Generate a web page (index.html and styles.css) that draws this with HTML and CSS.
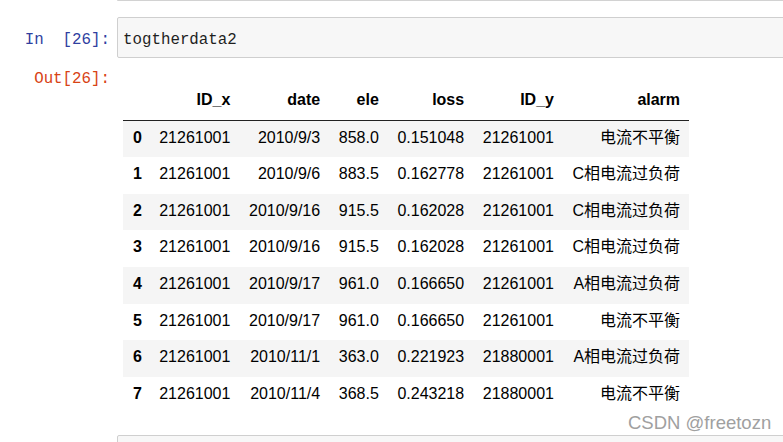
FILE: index.html
```html
<!DOCTYPE html>
<html>
<head>
<meta charset="utf-8">
<link rel="stylesheet" href="styles.css">
</head>
<body>
<div class="prev-cell"></div>
<div class="cell-in">
  <div class="prompt in-prompt">In&nbsp;&nbsp;[26]:</div>
  <div class="input-box">togtherdata2</div>
</div>
<div class="cell-out">
  <div class="prompt out-prompt">Out[26]:</div>
  <table class="df">
    <thead>
      <tr><th></th><th>ID_x</th><th>date</th><th>ele</th><th>loss</th><th>ID_y</th><th>alarm</th></tr>
    </thead>
    <tbody>
      <tr><th>0</th><td>21261001</td><td>2010/9/3</td><td>858.0</td><td>0.151048</td><td>21261001</td><td>电流不平衡</td></tr>
      <tr><th>1</th><td>21261001</td><td>2010/9/6</td><td>883.5</td><td>0.162778</td><td>21261001</td><td>C相电流过负荷</td></tr>
      <tr><th>2</th><td>21261001</td><td>2010/9/16</td><td>915.5</td><td>0.162028</td><td>21261001</td><td>C相电流过负荷</td></tr>
      <tr><th>3</th><td>21261001</td><td>2010/9/16</td><td>915.5</td><td>0.162028</td><td>21261001</td><td>C相电流过负荷</td></tr>
      <tr><th>4</th><td>21261001</td><td>2010/9/17</td><td>961.0</td><td>0.166650</td><td>21261001</td><td>A相电流过负荷</td></tr>
      <tr><th>5</th><td>21261001</td><td>2010/9/17</td><td>961.0</td><td>0.166650</td><td>21261001</td><td>电流不平衡</td></tr>
      <tr><th>6</th><td>21261001</td><td>2010/11/1</td><td>363.0</td><td>0.221923</td><td>21880001</td><td>A相电流过负荷</td></tr>
      <tr><th>7</th><td>21261001</td><td>2010/11/4</td><td>368.5</td><td>0.243218</td><td>21880001</td><td>电流不平衡</td></tr>
    </tbody>
  </table>
</div>
<div class="next-cell"></div>
<div class="watermark">CSDN @freetozn</div>
</body>
</html>
```
FILE: styles.css
```css
html, body {
  margin: 0;
  padding: 0;
  background: #fff;
  overflow: hidden;
}
body {
  width: 783px;
  height: 442px;
  position: relative;
  font-family: "Liberation Sans", Arial, "Noto Sans CJK SC", sans-serif;
}
.prev-cell {
  margin-left: 117px;
  height: 1px;
  background: #d2d2d2;
  border-bottom-left-radius: 2px;
}
.cell-in {
  display: flex;
  margin-top: 16px;
}
.prompt {
  width: 110px;
  flex: none;
  text-align: right;
  font-family: "Liberation Mono", "Noto Sans CJK SC", monospace;
  font-size: 15.8px;
  line-height: 20px;
  white-space: nowrap;
}
.in-prompt {
  color: #303f9f;
  padding-top: 13px;
  margin-right: 7px;
}
.input-box {
  flex: 1;
  margin-right: -20px;
  box-sizing: border-box;
  height: 41px;
  border: 1px solid #cfcfcf;
  border-radius: 2px;
  background: #f7f7f7;
  padding-left: 5px;
  padding-top: 12px;
  font-family: "Liberation Mono", monospace;
  font-size: 15.8px;
  line-height: 20px;
  color: #1f1f1f;
}
.cell-out {
  display: flex;
  margin-top: 10px;
}
.out-prompt {
  color: #d84315;
  padding-top: 1px;
  margin-right: 13px;
}
.df {
  border-collapse: collapse;
  margin-top: 15px;
  font-size: 16px;
  color: #000;
}
.df th, .df td {
  text-align: right;
  line-height: 20.6px;
  padding: 7px 9.3px 9px 9.3px;
  white-space: nowrap;
  vertical-align: top;
}
.df thead th {
  font-weight: bold;
  padding: 7px 9.3px 9px 9.3px;
  border-bottom: 1px solid #222;
}
.df tbody th {
  font-weight: bold;
  padding-left: 10px;
  padding-right: 8px;
}
.df tbody tr:nth-child(odd) {
  background: #f5f5f5;
}
.next-cell {
  margin-top: 22px;
  margin-left: 117px;
  margin-right: -20px;
  height: 20px;
  border: 1px solid #cfcfcf;
  border-radius: 2px;
  background: #f7f7f7;
}
.watermark {
  position: absolute;
  left: 628px;
  top: 412px;
  font-family: "Liberation Sans", Arial, sans-serif;
  font-size: 18.5px;
  line-height: 22px;
  color: #a0a0a0;
  text-shadow: 0 0 2px #fff;
  white-space: nowrap;
}
```
